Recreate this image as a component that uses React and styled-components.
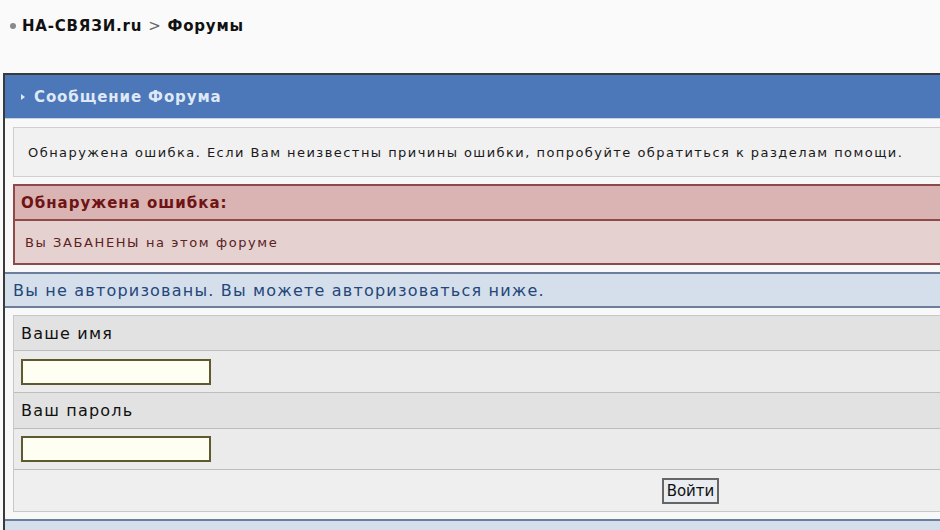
import React from "react";
import styled, { createGlobalStyle } from "styled-components";

const Global = createGlobalStyle`
  html, body { margin: 0; padding: 0; overflow: hidden; background: #fafafa; }
  body { font-family: "DejaVu Sans", Verdana, sans-serif; color: #111; }
`;

const Page = styled.div`
  width: 1373px;
  padding: 0 0 0 3px;
`;

const Crumbs = styled.div`
  display: flex;
  align-items: center;
  height: 73px;
  padding: 0 0 22px 7px;
  box-sizing: border-box;
  gap: 6px;
  font-size: 15px;
  letter-spacing: 0.8px;
`;

const Dot = styled.span`
  width: 6px;
  height: 6px;
  border-radius: 50%;
  background: #8a8a8a;
`;

const CrumbLink = styled.span`
  font-weight: bold;
  color: #111;
`;

const Sep = styled.span`
  color: #666;
`;

const Frame = styled.div`
  border-left: 2px solid #3a3a3a;
  border-top: 2px solid #3a3a3a;
  background: #f8f8f8;
`;

const Bar = styled.div`
  display: flex;
  align-items: center;
  gap: 9px;
  height: 43px;
  padding-left: 16px;
  background: #4c77b8;
  border-bottom: 1px solid #c9d3e0;
  color: #dfe8f5;
  font-weight: bold;
  font-size: 15px;
  letter-spacing: 0.9px;
`;

const Tri = styled.span`
  width: 0;
  height: 0;
  border-top: 3px solid transparent;
  border-bottom: 3px solid transparent;
  border-left: 4px solid #dfe8f5;
`;

const Body = styled.div`
  display: flex;
  flex-direction: column;
  padding: 8px 8px 0 8px;
`;

const Notice = styled.div`
  border: 1px solid #cfcfcf;
  background: #f1f1f1;
  height: 48px;
  display: flex;
  align-items: center;
  padding-left: 14px;
  font-size: 13px;
  letter-spacing: 1.45px;
  color: #1a1a1a;
`;

const ErrorBox = styled.div`
  margin-top: 7px;
  border: 2px solid #8e4a4a;
  display: flex;
  flex-direction: column;
`;

const ErrorHead = styled.div`
  height: 33px;
  display: flex;
  align-items: center;
  padding-left: 6px;
  background: #dab3b3;
  border-bottom: 2px solid #8e4a4a;
  color: #6e1414;
  font-weight: bold;
  font-size: 15px;
  letter-spacing: 1px;
`;

const ErrorText = styled.div`
  height: 42px;
  display: flex;
  align-items: center;
  padding-left: 10px;
  background: #e6d1d1;
  color: #5a2222;
  font-size: 13px;
  letter-spacing: 1.6px;
`;

const AuthBar = styled.div`
  margin: 7px -8px 0 -8px;
  height: 32px;
  display: flex;
  align-items: center;
  padding-left: 8px;
  background: #d5dfeb;
  border-top: 2px solid #6b7f9c;
  border-bottom: 2px solid #6b7f9c;
  color: #24467a;
  font-size: 16px;
  letter-spacing: 1.2px;
`;

const Form = styled.div`
  margin-top: 7px;
  border: 1px solid #c8c8c8;
  display: flex;
  flex-direction: column;
`;

const Row = styled.div`
  height: ${(p) => p.$h}px;
  display: flex;
  align-items: center;
  justify-content: ${(p) => (p.$center ? "center" : "flex-start")};
  padding-left: ${(p) => (p.$center ? 0 : 7)}px;
  background: ${(p) => p.$bg};
  border-bottom: ${(p) => (p.$last ? "none" : "1px solid #bdbdbd")};
  font-size: 16px;
  letter-spacing: 1.2px;
  color: #111;
`;

const Field = styled.input`
  width: 190px;
  height: 26px;
  box-sizing: border-box;
  border: 2px solid #5e5a2e;
  background: #fefef2;
`;

const Button = styled.button`
  font-family: "DejaVu Sans", Verdana, sans-serif;
  font-size: 15px;
  letter-spacing: 0;
  color: #111;
  height: 26px;
  padding: 0 3px;
  border: 2px solid #666;
  background: #e9edf2;
`;

const Footer = styled.div`
  margin: 7px -8px 0 -8px;
  height: 30px;
  background: #d5dfeb;
  border-top: 2px solid #6b7f9c;
`;

export default function App() {
  return (
    <>
      <Global />
      <Page>
        <Crumbs>
          <Dot />
          <CrumbLink>НА-СВЯЗИ.ru</CrumbLink>
          <Sep>&gt;</Sep>
          <CrumbLink>Форумы</CrumbLink>
        </Crumbs>
        <Frame>
          <Bar>
            <Tri />
            Сообщение Форума
          </Bar>
          <Body>
            <Notice>
              Обнаружена ошибка. Если Вам неизвестны причины ошибки, попробуйте обратиться к разделам помощи.
            </Notice>
            <ErrorBox>
              <ErrorHead>Обнаружена ошибка:</ErrorHead>
              <ErrorText>Вы ЗАБАНЕНЫ на этом форуме</ErrorText>
            </ErrorBox>
            <AuthBar>Вы не авторизованы. Вы можете авторизоваться ниже.</AuthBar>
            <Form>
              <Row $h={34} $bg="#e2e2e2">Ваше имя</Row>
              <Row $h={41} $bg="#ebebeb">
                <Field type="text" />
              </Row>
              <Row $h={35} $bg="#e2e2e2">Ваш пароль</Row>
              <Row $h={40} $bg="#ebebeb">
                <Field type="password" />
              </Row>
              <Row $h={41} $bg="#efefef" $center $last>
                <Button>Войти</Button>
              </Row>
            </Form>
            <Footer />
          </Body>
        </Frame>
      </Page>
    </>
  );
}
